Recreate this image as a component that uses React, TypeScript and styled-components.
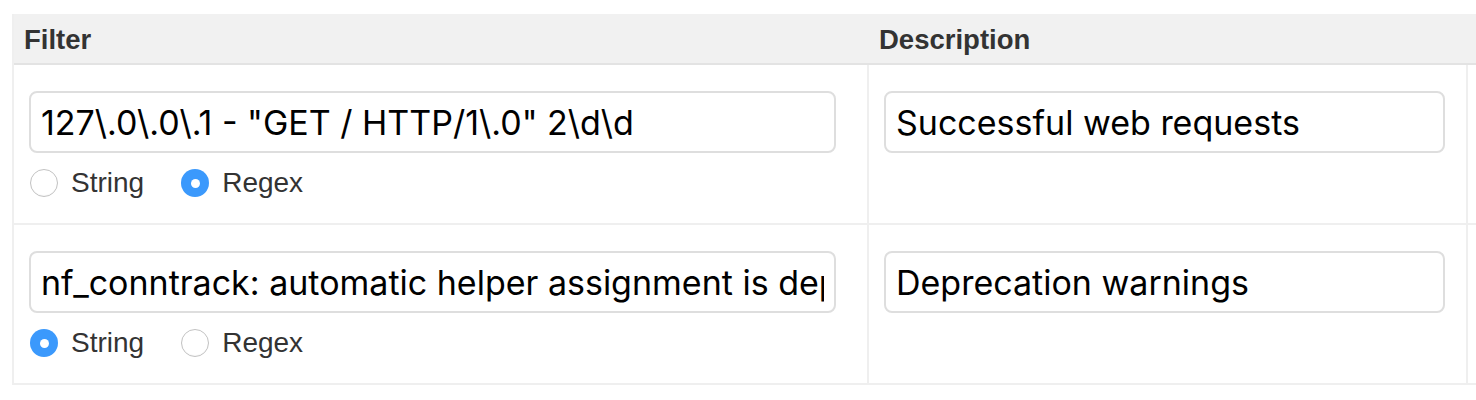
import React from "react";
import styled, { createGlobalStyle } from "styled-components";

const GlobalStyle = createGlobalStyle`
  html, body {
    margin: 0;
    padding: 0;
    background: #ffffff;
    overflow: hidden;
  }
  body {
    font-family: "Liberation Sans", Arial, sans-serif;
  }
`;

type Mode = "string" | "regex";

const rows: { pattern: string; mode: Mode; description: string }[] = [
  {
    pattern: '127\\.0\\.0\\.1 - "GET / HTTP/1\\.0" 2\\d\\d',
    mode: "regex",
    description: "Successful web requests",
  },
  {
    pattern: "nf_conntrack: automatic helper assignment is deprecated",
    mode: "string",
    description: "Deprecation warnings",
  },
];

const App = () => {
  return (
    <>
      <GlobalStyle />
      <Page>
        <Table>
          <HeadCell>Filter</HeadCell>
          <HeadCell>Description</HeadCell>
          <HeadCell />
          {rows.map((row, i) => (
            <React.Fragment key={i}>
              <Cell>
                <TextInput defaultValue={row.pattern} $width={807} />
                <RadioRow>
                  <RadioLabel>
                    <Radio type="radio" name={`mode-${i}`} defaultChecked={row.mode === "string"} />
                    String
                  </RadioLabel>
                  <RadioLabel>
                    <Radio type="radio" name={`mode-${i}`} defaultChecked={row.mode === "regex"} />
                    Regex
                  </RadioLabel>
                </RadioRow>
              </Cell>
              <Cell>
                <TextInput defaultValue={row.description} $width={561} />
              </Cell>
              <Cell $last />
            </React.Fragment>
          ))}
        </Table>
      </Page>
    </>
  );
};

export default App;

const Page = styled.div`
  padding: 14px 0 0 12px;
`;

const Table = styled.div`
  display: grid;
  grid-template-columns: 855px 599px 1fr;
  grid-template-rows: 51px 160px 160px;
  border-left: 2px solid #efefef;
`;

const HeadCell = styled.div`
  display: flex;
  align-items: center;
  padding: 2px 0 0 10px;
  background: #f1f1f1;
  border-bottom: 2px solid #e3e3e3;
  font-size: 27.5px;
  font-weight: bold;
  color: #333333;
  box-sizing: border-box;
`;

const Cell = styled.div<{ $last?: boolean }>`
  display: flex;
  flex-direction: column;
  align-items: flex-start;
  gap: 16px;
  padding: 26px 0 0 15px;
  box-sizing: border-box;
  border-bottom: 2px solid #efefef;
  border-right: ${(p) => (p.$last ? "none" : "2px solid #efefef")};
`;

const TextInput = styled.input<{ $width: number }>`
  width: ${(p) => p.$width}px;
  height: 62px;
  box-sizing: border-box;
  margin: 0;
  padding: 0 10px;
  border: 2px solid #dedede;
  border-radius: 8px;
  background: #ffffff;
  font-family: Inter, "Liberation Sans", sans-serif;
  font-size: 34px;
  color: #000000;
  outline: none;
`;

const RadioRow = styled.div`
  display: flex;
  align-items: center;
  gap: 36px;
`;

const RadioLabel = styled.label`
  display: flex;
  align-items: center;
  gap: 13px;
  font-size: 28px;
  color: #333333;
  line-height: 28px;
`;

const Radio = styled.input`
  appearance: none;
  margin: 0 0 0 1px;
  width: 28px;
  height: 28px;
  border-radius: 50%;
  box-sizing: border-box;
  border: 1.5px solid #c2c2c2;
  background: #ffffff;
  box-shadow: inset 0 -1px 1px rgba(0, 0, 0, 0.03);
  position: relative;

  &:checked {
    border: none;
    background: #3b99fc;
    box-shadow: none;
  }

  &:checked::after {
    content: "";
    position: absolute;
    left: 50%;
    top: 50%;
    width: 9px;
    height: 9px;
    margin: -4.5px 0 0 -4.5px;
    border-radius: 50%;
    background: #ffffff;
  }
`;
